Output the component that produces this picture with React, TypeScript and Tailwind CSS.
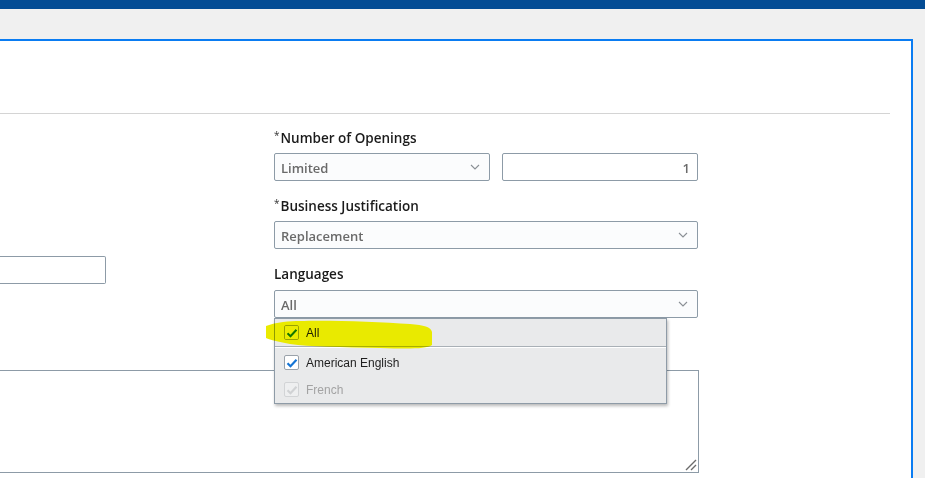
import React from 'react';

const Chevron = () => (
  <svg width="10" height="6" viewBox="0 0 10 6" className="shrink-0">
    <path d="M1 1l4 4 4-4" fill="none" stroke="#8a8f95" strokeWidth="1.1" />
  </svg>
);

const Check = ({ color }: { color: string }) => (
  <svg width="12" height="10" viewBox="0 0 12 10">
    <path d="M1.5 5.2l3 3 6-6.4" fill="none" stroke={color} strokeWidth="2.2" />
  </svg>
);

const Label = ({ text, required }: { text: string; required?: boolean }) => (
  <div className="h-4 flex items-center text-[13.5px] font-semibold text-[#1b1b1b] leading-4">
    {required && <span className="text-[10px] font-normal -mt-[6px] mr-[1px] text-[#333]">*</span>}
    {text}
  </div>
);

const Select = ({ value, width }: { value: string; width: string }) => (
  <div
    className={`${width} h-[28px] border border-[#8d9ba7] bg-[#fbfcfd] rounded-[2px] flex items-center justify-between pl-[6px] pr-[9px]`}
  >
    <span className="text-[13px] font-semibold text-[#6a6a6a] pt-[3px]">{value}</span>
    <Chevron />
  </div>
);

const Option = ({ label, checked, disabled }: { label: string; checked: boolean; disabled?: boolean }) => (
  <div className="h-[27px] flex items-center pl-[9px] gap-[7px]">
    <div
      className={`w-[15px] h-[15px] rounded-[2px] border flex items-center justify-center ${
        disabled ? 'border-[#d2d4d6] bg-[#eeeff0]' : 'border-[#9aa2aa] bg-white'
      }`}
    >
      {checked && <Check color={disabled ? '#d0d2d4' : '#1474d4'} />}
    </div>
    <span
      className={`text-[12px] ${disabled ? 'text-[#a3a3a3]' : 'text-[#1e1e1e]'}`}
      style={{ fontFamily: '"Liberation Sans", Arial, sans-serif' }}
    >
      {label}
    </span>
  </div>
);

export default function App() {
  return (
    <div
      className="relative w-[925px] h-[478px] overflow-hidden bg-[#f0f0f0]"
      style={{ fontFamily: '"Open Sans", "Noto Sans", sans-serif' }}
    >
      <div className="h-[9px] bg-[#034c94]" />
      <div className="pt-[30px] pr-[12px]">
        <div className="h-[460px] bg-white border-2 border-l-0 border-b-0 border-[#0a7cf2]">
          <div className="h-[72px]" />
          <div className="h-px bg-[#d4d4d4] mr-[21px]" />

          <div className="flex pt-[16px]">
            {/* left column */}
            <div className="w-[274px] pt-[126px]">
              <div className="w-[106px] h-[28px] border border-l-0 border-[#8d9ba7] rounded-r-[2px] bg-white" />
            </div>

            {/* right column */}
            <div className="w-[424px]">
              <Label text="Number of Openings" required />
              <div className="mt-[7px] flex gap-[12px]">
                <Select value="Limited" width="w-[217px]" />
                <div className="w-[196px] h-[28px] border border-[#8d9ba7] rounded-[2px] bg-white flex items-center justify-end pr-[7px] pt-[3px] text-[13px] font-semibold text-[#6a6a6a]">
                  1
                </div>
              </div>

              <div className="mt-[17px]">
                <Label text="Business Justification" required />
              </div>
              <div className="mt-[7px]">
                <Select value="Replacement" width="w-[424px]" />
              </div>

              <div className="mt-[17px]">
                <Label text="Languages" />
              </div>
              <div className="mt-[8px] relative z-10">
                <Select value="All" width="w-[424px]" />
                <div className="absolute left-0 top-full w-[393px] h-[86px] bg-[#e9eaeb] border border-[#8e9ba7] shadow-[1px_2px_3px_rgba(0,0,0,0.28)]">
                  <Option label="All" checked />
                  <div className="h-px bg-[#a9b0b6]" />
                  <div className="h-px bg-white" />
                  <div className="pt-[1px]">
                    <Option label="American English" checked />
                    <Option label="French" checked disabled />
                  </div>
                </div>
              </div>
            </div>
          </div>

          {/* textarea */}
          <div className="mt-[52px] relative w-[699px] h-[103px] border border-l-0 border-[#8d9ba7] bg-white">
            <svg width="12" height="12" viewBox="0 0 12 12" className="absolute right-[1px] bottom-[1px]">
              <path d="M1 11L11 1M6 11l5-5" stroke="#6b6b6b" strokeWidth="1.4" />
            </svg>
          </div>
        </div>
      </div>

      {/* highlighter mark */}
      <svg
        className="absolute left-0 top-0 pointer-events-none mix-blend-darken z-20"
        width="925"
        height="478"
        viewBox="0 0 925 478"
      >
        <path
          d="M266 326 C 276 322, 290 321, 300 321 C 330 320, 380 322, 410 324 C 424 325, 431 327, 432 332 L 432 345 C 426 349, 410 349, 380 348 C 340 347, 310 347, 290 344 C 280 342, 270 340, 266 338 Z"
          fill="#ebeb00"
        />
      </svg>
    </div>
  );
}
